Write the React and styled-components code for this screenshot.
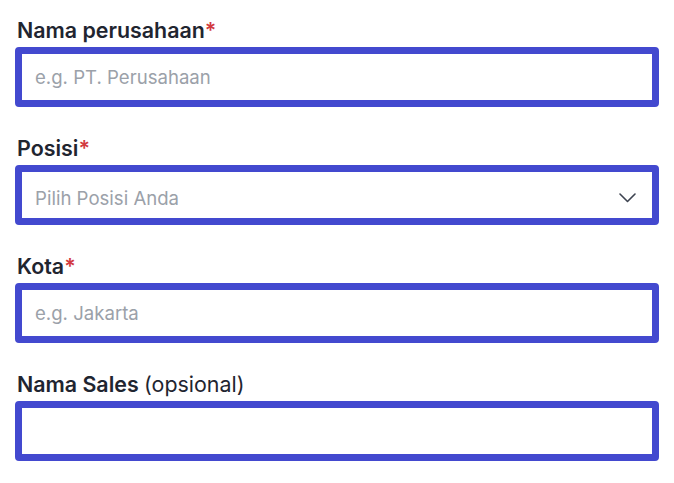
import React from "react";
import styled, { createGlobalStyle } from "styled-components";

const GlobalStyle = createGlobalStyle`
  html, body { margin: 0; padding: 0; background: #ffffff; }
  body { font-family: Inter, "Noto Sans", sans-serif; }
  * { box-sizing: border-box; }
`;

const Form = styled.form`
  display: flex;
  flex-direction: column;
  gap: 27px;
  padding: 16px 15px 0 15px;
  width: 674px;
`;

const Field = styled.div`
  display: flex;
  flex-direction: column;
  gap: 3px;
`;

const Label = styled.label`
  font-size: 21.4px;
  line-height: 28px;
  font-weight: 600;
  color: #1f2530;
  padding-left: 2px;
`;

const Required = styled.span`
  color: #d23a3f;
`;

const Optional = styled.span`
  font-weight: 400;
`;

const Input = styled.input`
  display: block;
  width: 100%;
  height: 60px;
  border: 7px solid #4349cf;
  border-radius: 4px;
  padding: 0 13px;
  font-family: Inter, "Noto Sans", sans-serif;
  font-size: 18.6px;
  color: #1f2530;
  background: #fff;
  outline: none;
  &::placeholder { color: #9ba1a9; }
`;

const Select = styled.div`
  display: flex;
  align-items: center;
  justify-content: space-between;
  height: 60px;
  border: 7px solid #4349cf;
  border-radius: 4px;
  padding: 6px 16px 0 13px;
  font-size: 18.6px;
  background: #fff;
`;

const Placeholder = styled.span`
  color: #9ba1a9;
`;

const Chevron = () => (
  <svg width="17" height="10" viewBox="0 0 17 10" fill="none">
    <path d="M1 1l7.5 7.5L16 1" stroke="#3d4350" strokeWidth="1.6" strokeLinecap="round" strokeLinejoin="round" />
  </svg>
);

export default function App() {
  return (
    <>
      <GlobalStyle />
      <Form onSubmit={(e) => e.preventDefault()}>
        <Field>
          <Label>Nama perusahaan<Required>*</Required></Label>
          <Input placeholder="e.g. PT. Perusahaan" />
        </Field>
        <Field>
          <Label>Posisi<Required>*</Required></Label>
          <Select>
            <Placeholder>Pilih Posisi Anda</Placeholder>
            <Chevron />
          </Select>
        </Field>
        <Field>
          <Label>Kota<Required>*</Required></Label>
          <Input placeholder="e.g. Jakarta" />
        </Field>
        <Field>
          <Label>Nama Sales <Optional>(opsional)</Optional></Label>
          <Input />
        </Field>
      </Form>
    </>
  );
}
